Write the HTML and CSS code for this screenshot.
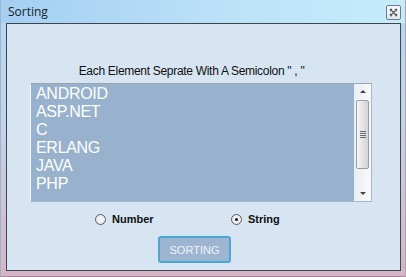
FILE: index.html
```html
<!DOCTYPE html>
<html>
<head>
<meta charset="utf-8">
<link rel="stylesheet" href="styles.css">
</head>
<body>
<div class="window">
  <div class="titlebar">
    <span class="title">Sorting</span>
    <span class="close">
      <svg width="9" height="9" viewBox="0 0 9 9"><path d="M1 1L8 8M8 1L1 8M1 3L3 1M6 1L8 3M1 6L3 8M6 8L8 6" stroke="#555" stroke-width="1.2" fill="none"/></svg>
    </span>
  </div>
  <div class="panel">
    <div class="label">Each Element Seprate With A Semicolon " , "</div>
    <div class="listbox">
      <div class="items">
        <div>ANDROID</div>
        <div>ASP.NET</div>
        <div>C</div>
        <div>ERLANG</div>
        <div>JAVA</div>
        <div>PHP</div>
      </div>
      <div class="scrollbar">
        <div class="arrow up"></div>
        <div class="thumb"><span class="grip"></span></div>
        <div class="arrow down"></div>
      </div>
    </div>
    <div class="radios">
      <label class="radio"><span class="circle"></span>Number</label>
      <label class="radio"><span class="circle checked"></span>String</label>
    </div>
    <div class="btnrow"><button class="btn">SORTING</button></div>
  </div>
</div>
</body>
</html>
```
FILE: styles.css
```css
html, body { margin: 0; padding: 0; }
body { width: 406px; height: 277px; overflow: hidden; font-family: "Liberation Sans", Arial, sans-serif; }
.window {
  width: 406px; height: 277px; box-sizing: border-box;
  background: linear-gradient(to bottom, #b4d8f4 0%, #c4d4e8 45%, #d8b4c4 100%);
  display: flex; flex-direction: column;
  border-left: 1px solid #9cb4cc; border-right: 1px solid #b4a0b0; border-bottom: 1px solid #a88898;
}
.titlebar {
  height: 23px; flex: none; display: flex; align-items: center; justify-content: space-between;
  background: linear-gradient(to right, #a4cff2, #bde3f8 60%, #c6ebfb);
  padding: 0 4px 0 7px;
}
.title { font-family: "Open Sans", "Noto Sans", sans-serif; font-size: 12px; color: #1c1c1c; margin-top: -1px; }
.close {
  width: 13px; height: 13px; border: 1px solid #6c7c8c; border-radius: 2px;
  background: linear-gradient(#f4f8fb, #dfe8f0); display: flex; align-items: center; justify-content: center; margin-top: 1px;
}
.panel {
  flex: 1; margin: 0 4px 5px 5px; background: #d7e4f1;
  border: 1px solid #3c4650; display: flex; flex-direction: column;
}
.label { font-size: 12px; line-height: 14px; color: #101010; text-align: center; margin-top: 40px; padding-right: 24px; letter-spacing: -0.3px; }
.listbox {
  margin: 5px 0 0 23px; width: 342px; height: 119px; box-sizing: border-box;
  border: 1px solid #a9b6c4; border-top-color: #9aa4ae; border-left-color: #f2f6fa;
  background: #98b2cd; display: flex;
}
.items { flex: 1; padding: 1px 0 0 5px; color: #fff; font-size: 16px; line-height: 18px; letter-spacing: -0.3px; }
.scrollbar { width: 17px; background: linear-gradient(to right, #eaeef2, #f8f9fb); display: flex; flex-direction: column; align-items: center; }
.arrow { width: 0; height: 0; border-left: 3px solid transparent; border-right: 3px solid transparent; }
.arrow.up { border-bottom: 3px solid #404040; margin: 6px 0 7px; }
.arrow.down { border-top: 3px solid #404040; margin: auto 0 6px; }
.thumb {
  width: 13px; height: 69px; box-sizing: border-box; border: 1px solid #9a9ea4; border-radius: 2px;
  background: linear-gradient(to right, #f6f6f6, #e0e0e2 60%, #d2d4d8);
  display: flex; align-items: center; justify-content: center;
}
.grip { width: 6px; height: 7px; background: repeating-linear-gradient(to bottom, #6a6e74 0 1px, transparent 1px 2px); }
.radios { display: flex; margin-top: 9px; height: 16px; align-items: center; padding-left: 88px; }
.radio { display: flex; align-items: center; font-weight: bold; font-size: 11px; color: #101010; }
.radio:first-child { width: 136px; }
.circle {
  width: 11px; height: 11px; box-sizing: border-box; border-radius: 50%; border: 1px solid #5c5c5c;
  background: radial-gradient(circle, #f6f8fa, #dce0e6); margin-right: 6px; position: relative;
}
.circle.checked::after { content: ""; position: absolute; left: 3px; top: 3px; width: 3px; height: 3px; border-radius: 50%; background: #111; }
.btnrow { padding-left: 151px; margin-top: 9px; }
.btn {
  width: 73px; height: 27px; box-sizing: border-box; border: 2px solid #4aa6d6; border-radius: 3px;
  background: #9eb5d1; color: #eef3f9; font-family: "Liberation Sans", Arial, sans-serif; font-size: 11px; padding: 0; margin: 0;
}
```
